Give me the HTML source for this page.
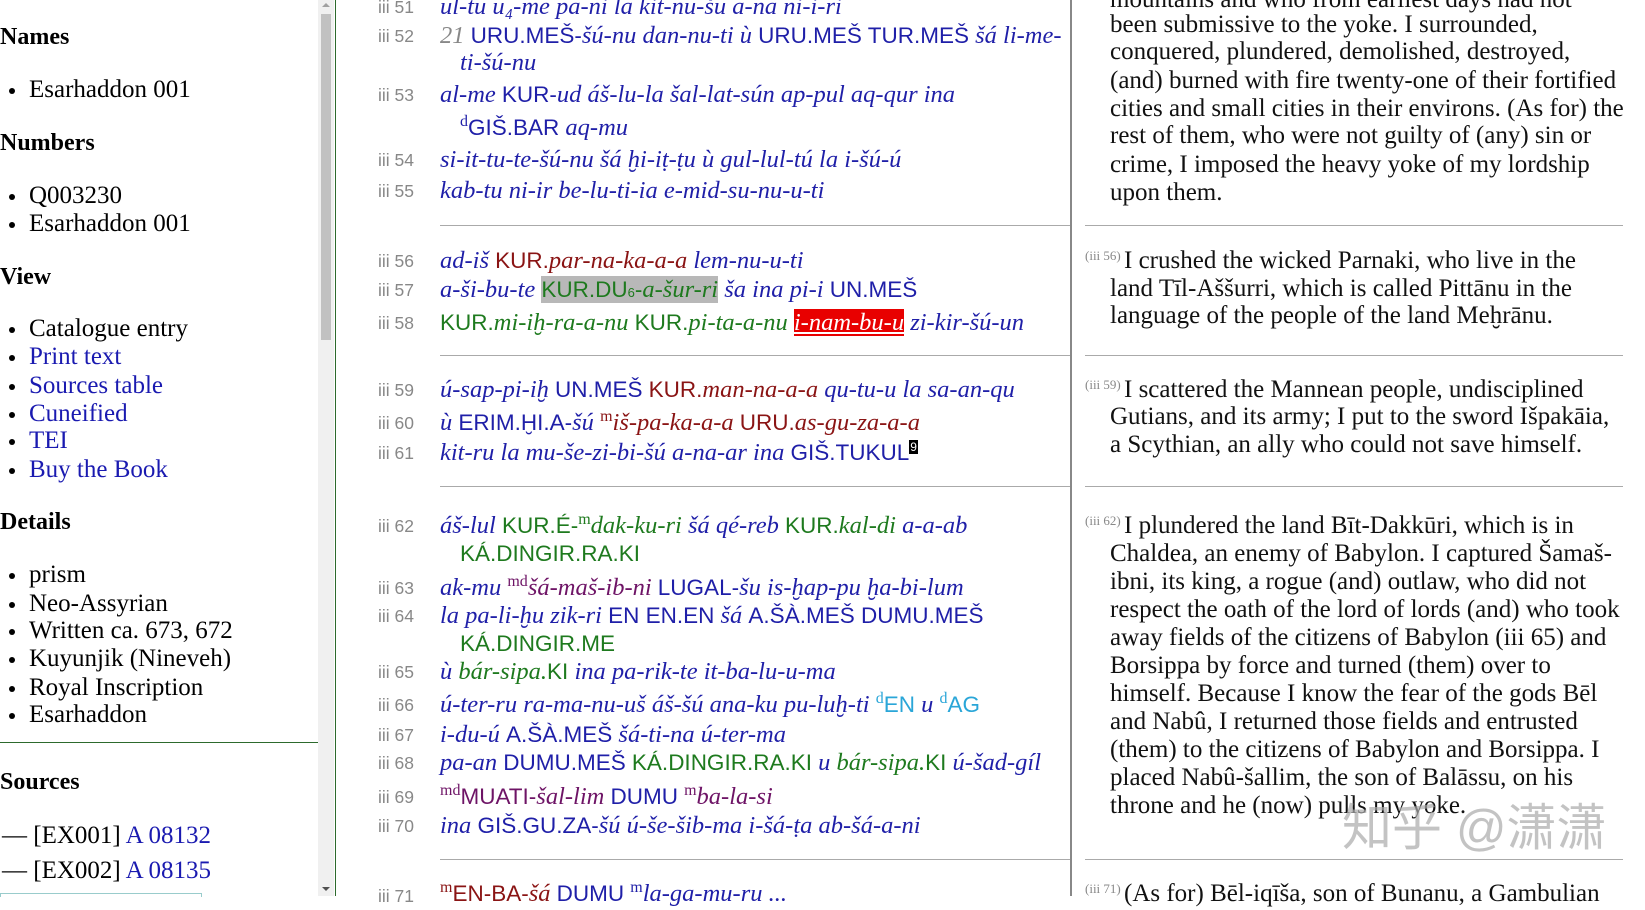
<!DOCTYPE html>
<html><head><meta charset="utf-8">
<style>
body{margin:0;width:1645px;height:896px;overflow:hidden;background:#fff;position:relative;font-family:"Liberation Serif",serif;}
.a{position:absolute;white-space:nowrap;line-height:28px;}
.h{font-weight:bold;font-size:24px;left:0}
.li{font-size:25px;left:29px}
.li:before{content:"";position:absolute;left:-20px;top:12px;width:6px;height:6px;border-radius:50%;background:#000}
.lk{color:#1a1ab0}
.n{font-family:"Liberation Sans",sans-serif;font-size:17.5px;color:#888;left:378px}
.t{font-size:24.5px;left:440px;color:#1f1fa8;font-style:italic}
.t.c{left:460px}
.s{font-family:"Liberation Sans",sans-serif;font-style:normal;font-size:22.5px}
.r{color:#8a1414}.g{color:#1e7a1e}.p{color:#6e1466}.cy{color:#2aa6d8}.b{color:#1a1aa8}
sup{font-size:16px;vertical-align:9px;line-height:0;font-style:normal}
.x{font-size:25px;left:1110px;color:#111}
.ln{font-size:13px;color:#888;vertical-align:8px;line-height:0;margin-right:-3px}
.hr{position:absolute;height:1px;background:#aaa}
</style></head><body>
<div class="a h" style="top:23px">Names</div>
<div class="a li" style="top:76px">Esarhaddon 001</div>
<div class="a h" style="top:129px">Numbers</div>
<div class="a li" style="top:182px">Q003230</div>
<div class="a li" style="top:210px">Esarhaddon 001</div>
<div class="a h" style="top:263px">View</div>
<div class="a li" style="top:315px">Catalogue entry</div>
<div class="a li lk" style="top:343px">Print text</div>
<div class="a li lk" style="top:372px">Sources table</div>
<div class="a li lk" style="top:400px">Cuneified</div>
<div class="a li lk" style="top:427px">TEI</div>
<div class="a li lk" style="top:456px">Buy the Book</div>
<div class="a h" style="top:508px">Details</div>
<div class="a li" style="top:561px">prism</div>
<div class="a li" style="top:590px">Neo-Assyrian</div>
<div class="a li" style="top:617px">Written ca. 673, 672</div>
<div class="a li" style="top:645px">Kuyunjik (Nineveh)</div>
<div class="a li" style="top:674px">Royal Inscription</div>
<div class="a li" style="top:701px">Esarhaddon</div>
<div style="position:absolute;left:0;top:742px;width:318px;height:1px;background:#2d6a2d"></div>
<div class="a h" style="top:768px">Sources</div>
<div class="a" style="top:822px;left:2px;font-size:25px">— [EX001] <span class="lk">A 08132</span></div>
<div class="a" style="top:857px;left:2px;font-size:25px">— [EX002] <span class="lk">A 08135</span></div>
<div style="position:absolute;left:0;top:893px;width:200px;height:3px;border:1px solid #9cc;border-bottom:none"></div>
<div style="position:absolute;left:318px;top:0;width:16px;height:896px;background:#f0f0f0"></div>
<div style="position:absolute;left:321px;top:14px;width:10px;height:326px;background:#c1c1c1"></div>
<div style="position:absolute;left:322px;top:3px;border:4px solid transparent;border-bottom:4px solid #a0a0a0;border-top:none"></div>
<div style="position:absolute;left:322px;top:887px;border:4px solid transparent;border-top:4px solid #505050;border-bottom:none"></div>
<div style="position:absolute;left:335px;top:0;width:1px;height:896px;background:#2d6a2d"></div>
<div class="a n" style="top:-7px">iii 51</div><div class="a t" style="top:-7px">ul-tu u₄-me pa-ni la kit-nu-šu a-na ni-i-ri</div>
<div class="a n" style="top:22px">iii 52</div><div class="a t" style="top:22px"><span style="color:#888">21</span> <span class="s">URU.MEŠ-</span>šú-nu dan-nu-ti ù <span class="s">URU.MEŠ TUR.MEŠ</span> šá li-me-</div>
<div class="a t c" style="top:49px">ti-šú-nu</div>
<div class="a n" style="top:81px">iii 53</div><div class="a t" style="top:81px">al-me <span class="s">KUR-</span>ud áš-lu-la šal-lat-sún ap-pul aq-qur ina</div>
<div class="a t c" style="top:114px"><sup>d</sup><span class="s">GIŠ.BAR</span> aq-mu</div>
<div class="a n" style="top:146px">iii 54</div><div class="a t" style="top:146px">si-it-tu-te-šú-nu šá ḫi-iṭ-ṭu ù gul-lul-tú la i-šú-ú</div>
<div class="a n" style="top:177px">iii 55</div><div class="a t" style="top:177px">kab-tu ni-ir be-lu-ti-ia e-mid-su-nu-u-ti</div>
<div class="hr" style="left:440px;top:225px;width:630px"></div>
<div class="a n" style="top:247px">iii 56</div><div class="a t" style="top:247px">ad-iš <span class="r"><span class="s">KUR.</span>par-na-ka-a-a</span> lem-nu-u-ti</div>
<div class="a n" style="top:276px">iii 57</div><div class="a t" style="top:276px">a-ši-bu-te <span class="g" style="background:#b8b8b8"><span class="s">KUR.DU<span style="font-size:13px">6</span>-</span>a-šur-ri</span> ša ina pi-i <span class="s">UN.MEŠ</span></div>
<div class="a n" style="top:309px">iii 58</div><div class="a t" style="top:309px"><span class="g"><span class="s">KUR.</span>mi-iḫ-ra-a-nu <span class="s">KUR.</span>pi-ta-a-nu</span> <span style="background:#e80000;color:#fff;text-decoration:underline">i-nam-bu-u</span> zi-kir-šú-un</div>
<div class="hr" style="left:440px;top:355px;width:630px"></div>
<div class="a n" style="top:376px">iii 59</div><div class="a t" style="top:376px">ú-sap-pi-iḫ <span class="s">UN.MEŠ</span> <span class="r"><span class="s">KUR.</span>man-na-a-a</span> qu-tu-u la sa-an-qu</div>
<div class="a n" style="top:409px">iii 60</div><div class="a t" style="top:409px">ù <span class="s">ERIM.ḪI.A-</span>šú <span class="r"><sup>m</sup>iš-pa-ka-a-a <span class="s">URU.</span>as-gu-za-a-a</span></div>
<div class="a n" style="top:439px">iii 61</div><div class="a t" style="top:439px">kit-ru la mu-še-zi-bi-šú a-na-ar ina <span class="s">GIŠ.TUKUL</span><span style="font-style:normal;font-family:'Liberation Sans',sans-serif;font-size:12px;background:#000;color:#fff;vertical-align:9px;line-height:0;padding:0 1px">9</span></div>
<div class="hr" style="left:440px;top:486px;width:630px"></div>
<div class="a n" style="top:512px">iii 62</div><div class="a t" style="top:512px">áš-lul <span class="g"><span class="s">KUR.É-</span><sup>m</sup>dak-ku-ri</span> šá qé-reb <span class="g"><span class="s">KUR.</span>kal-di</span> a-a-ab</div>
<div class="a t c g" style="top:540px"><span class="s">KÁ.DINGIR.RA.KI</span></div>
<div class="a n" style="top:574px">iii 63</div><div class="a t" style="top:574px">ak-mu <span class="p"><sup>md</sup>šá-maš-ib-ni</span> <span class="s">LUGAL-</span>šu is-ḫap-pu ḫa-bi-lum</div>
<div class="a n" style="top:602px">iii 64</div><div class="a t" style="top:602px">la pa-li-ḫu zik-ri <span class="s">EN EN.EN</span> šá <span class="s">A.ŠÀ.MEŠ DUMU.MEŠ</span></div>
<div class="a t c g" style="top:630px"><span class="s">KÁ.DINGIR.ME</span></div>
<div class="a n" style="top:658px">iii 65</div><div class="a t" style="top:658px">ù <span class="g">bár-sipa.<span class="s">KI</span></span> ina pa-rik-te it-ba-lu-u-ma</div>
<div class="a n" style="top:691px">iii 66</div><div class="a t" style="top:691px">ú-ter-ru ra-ma-nu-uš áš-šú ana-ku pu-luḫ-ti <span class="cy"><sup>d</sup><span class="s">EN</span></span> u <span class="cy"><sup>d</sup><span class="s">AG</span></span></div>
<div class="a n" style="top:721px">iii 67</div><div class="a t" style="top:721px">i-du-ú <span class="s">A.ŠÀ.MEŠ</span> šá-ti-na ú-ter-ma</div>
<div class="a n" style="top:749px">iii 68</div><div class="a t" style="top:749px">pa-an <span class="s">DUMU.MEŠ</span> <span class="g"><span class="s">KÁ.DINGIR.RA.KI</span></span> u <span class="g">bár-sipa.<span class="s">KI</span></span> ú-šad-gíl</div>
<div class="a n" style="top:783px">iii 69</div><div class="a t" style="top:783px"><span class="p"><sup>md</sup><span class="s">MUATI-</span>šal-lim</span> <span class="s">DUMU</span> <span class="p"><sup>m</sup>ba-la-si</span></div>
<div class="a n" style="top:812px">iii 70</div><div class="a t" style="top:812px">ina <span class="s">GIŠ.GU.ZA-</span>šú ú-še-šib-ma i-šá-ṭa ab-šá-a-ni</div>
<div class="hr" style="left:440px;top:859px;width:630px"></div>
<div class="a n" style="top:882px">iii 71</div><div class="a t" style="top:880px"><span class="r"><sup>m</sup><span class="s">EN-BA-</span>šá</span> <span class="s">DUMU</span> <sup>m</sup>la-ga-mu-ru ...</div>
<div style="position:absolute;left:1070px;top:0;width:2px;height:896px;background:#888"></div>
<div class="a x" style="top:-14px">mountains and who from earliest days had not</div>
<div class="a x" style="top:11px">been submissive to the yoke. I surrounded,</div>
<div class="a x" style="top:38px">conquered, plundered, demolished, destroyed,</div>
<div class="a x" style="top:67px">(and) burned with fire twenty-one of their fortified</div>
<div class="a x" style="top:95px">cities and small cities in their environs. (As for) the</div>
<div class="a x" style="top:122px">rest of them, who were not guilty of (any) sin or</div>
<div class="a x" style="top:151px">crime, I imposed the heavy yoke of my lordship</div>
<div class="a x" style="top:179px">upon them.</div>
<div class="hr" style="left:1085px;top:225px;width:538px"></div>
<div class="a x" style="top:247px;left:1085px"><span class="ln">(iii 56)</span> I crushed the wicked Parnaki, who live in the</div>
<div class="a x" style="top:275px">land Tīl-Aššurri, which is called Pittānu in the</div>
<div class="a x" style="top:302px">language of the people of the land Meḫrānu.</div>
<div class="hr" style="left:1085px;top:355px;width:538px"></div>
<div class="a x" style="top:376px;left:1085px"><span class="ln">(iii 59)</span> I scattered the Mannean people, undisciplined</div>
<div class="a x" style="top:403px">Gutians, and its army; I put to the sword Išpakāia,</div>
<div class="a x" style="top:431px">a Scythian, an ally who could not save himself.</div>
<div class="hr" style="left:1085px;top:486px;width:538px"></div>
<div class="a x" style="top:512px;left:1085px"><span class="ln">(iii 62)</span> I plundered the land Bīt-Dakkūri, which is in</div>
<div class="a x" style="top:540px">Chaldea, an enemy of Babylon. I captured Šamaš-</div>
<div class="a x" style="top:568px">ibni, its king, a rogue (and) outlaw, who did not</div>
<div class="a x" style="top:596px">respect the oath of the lord of lords (and) who took</div>
<div class="a x" style="top:624px">away fields of the citizens of Babylon (iii 65) and</div>
<div class="a x" style="top:652px">Borsippa by force and turned (them) over to</div>
<div class="a x" style="top:680px">himself. Because I know the fear of the gods Bēl</div>
<div class="a x" style="top:708px">and Nabû, I returned those fields and entrusted</div>
<div class="a x" style="top:736px">(them) to the citizens of Babylon and Borsippa. I</div>
<div class="a x" style="top:764px">placed Nabû-šallim, the son of Balāssu, on his</div>
<div class="a x" style="top:792px">throne and he (now) pulls my yoke.</div>
<div class="hr" style="left:1085px;top:859px;width:538px"></div>
<div class="a x" style="top:880px;left:1085px"><span class="ln">(iii 71)</span> (As for) Bēl-iqīša, son of Bunanu, a Gambulian</div>
<div class="a" style="left:1342px;top:800px;font-size:50px;line-height:56px;color:rgba(170,170,170,0.7);font-family:'Liberation Sans','Noto Sans CJK SC',sans-serif">知乎 @潇潇</div>
</body></html>
